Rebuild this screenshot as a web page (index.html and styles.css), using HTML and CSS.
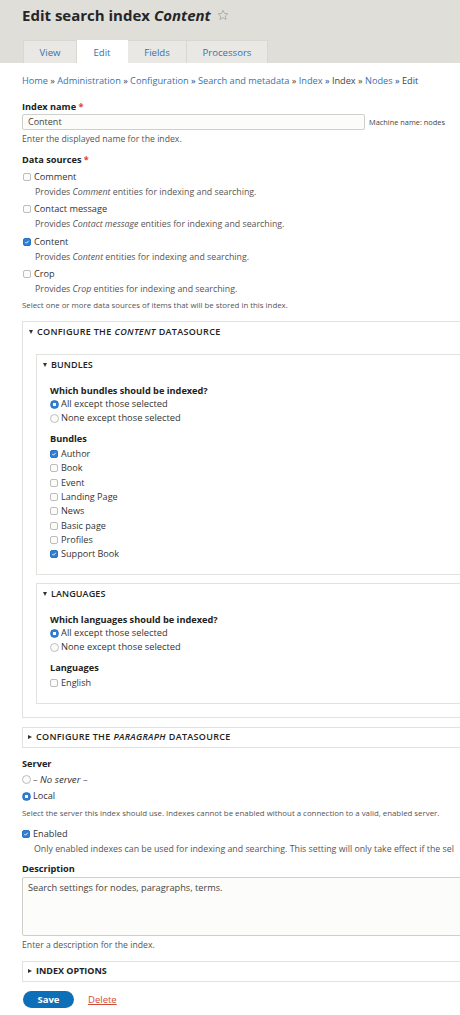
FILE: index.html
```html
<!DOCTYPE html>
<html lang="en">
<head>
    <meta charset="UTF-8">
    <meta name="viewport" content="width=device-width, initial-scale=1.0">
    <title>Edit search index Content</title>
    <link rel="stylesheet" href="styles.css">
</head>
<body>
    <header class="page-head">
        <h1>Edit search index <em>Content</em>
            <svg class="star" width="12" height="12" viewBox="0 0 24 24"><path d="M12 2.5l2.9 6.3 6.8.7-5.1 4.6 1.5 6.8L12 17.4l-6.1 3.5 1.5-6.8-5.1-4.6 6.8-.7z" fill="none" stroke="#a5a5a0" stroke-width="1.6" stroke-linejoin="round"/></svg>
        </h1>
        <nav class="tabs">
            <a href="#" class="tab tab-view">View</a>
            <a href="#" class="tab tab-edit active">Edit</a>
            <a href="#" class="tab tab-fields">Fields</a>
            <a href="#" class="tab tab-proc">Processors</a>
        </nav>
    </header>

    <main class="content">
        <div class="breadcrumb">
            <a href="#">Home</a> » <a href="#">Administration</a> » <a href="#">Configuration</a> » <a href="#">Search and metadata</a> » <a href="#">Index</a> » Index » <a href="#">Nodes</a> » Edit
        </div>

        <div class="label label-first">Index name <span class="req">*</span></div>
        <div class="name-row">
            <div class="input">Content</div>
            <span class="machine">Machine name: nodes</span>
        </div>
        <p class="desc">Enter the displayed name for the index.</p>

        <div class="label label-sources">Data sources <span class="req">*</span></div>
        <div class="sources">
            <div class="source">
                <div class="option"><span class="cb"></span>Comment</div>
                <p class="opt-desc">Provides <em>Comment</em> entities for indexing and searching.</p>
            </div>
            <div class="source">
                <div class="option"><span class="cb"></span>Contact message</div>
                <p class="opt-desc">Provides <em>Contact message</em> entities for indexing and searching.</p>
            </div>
            <div class="source">
                <div class="option"><span class="cb on"><svg viewBox="0 0 8 8"><path d="M1.8 4.1l1.5 1.5 3-3.2" fill="none" stroke="#fff" stroke-width="1.2"/></svg></span>Content</div>
                <p class="opt-desc">Provides <em>Content</em> entities for indexing and searching.</p>
            </div>
            <div class="source">
                <div class="option"><span class="cb"></span>Crop</div>
                <p class="opt-desc">Provides <em>Crop</em> entities for indexing and searching.</p>
            </div>
        </div>
        <p class="small">Select one or more data sources of items that will be stored in this index.</p>

        <section class="box box-content">
            <div class="summary open">Configure the <em>Content</em> datasource</div>
            <div class="box-body">
                <section class="box box-inner">
                    <div class="summary open">Bundles</div>
                    <div class="inner-body">
                        <div class="label">Which bundles should be indexed?</div>
                        <div class="option small-opt"><span class="rd on"></span>All except those selected</div>
                        <div class="option small-opt"><span class="rd"></span>None except those selected</div>
                        <div class="label label-group">Bundles</div>
                        <div class="list">
                            <div class="option list-opt"><span class="cb on"><svg viewBox="0 0 8 8"><path d="M1.8 4.1l1.5 1.5 3-3.2" fill="none" stroke="#fff" stroke-width="1.2"/></svg></span>Author</div>
                            <div class="option list-opt"><span class="cb"></span>Book</div>
                            <div class="option list-opt"><span class="cb"></span>Event</div>
                            <div class="option list-opt"><span class="cb"></span>Landing Page</div>
                            <div class="option list-opt"><span class="cb"></span>News</div>
                            <div class="option list-opt"><span class="cb"></span>Basic page</div>
                            <div class="option list-opt"><span class="cb"></span>Profiles</div>
                            <div class="option list-opt"><span class="cb on"><svg viewBox="0 0 8 8"><path d="M1.8 4.1l1.5 1.5 3-3.2" fill="none" stroke="#fff" stroke-width="1.2"/></svg></span>Support Book</div>
                        </div>
                    </div>
                </section>

                <section class="box box-inner box-lang">
                    <div class="summary open">Languages</div>
                    <div class="inner-body">
                        <div class="label">Which languages should be indexed?</div>
                        <div class="option small-opt"><span class="rd on"></span>All except those selected</div>
                        <div class="option small-opt"><span class="rd"></span>None except those selected</div>
                        <div class="label label-group">Languages</div>
                        <div class="option list-opt"><span class="cb"></span>English</div>
                    </div>
                </section>
            </div>
        </section>

        <section class="box box-closed">
            <div class="summary">Configure the <em>Paragraph</em> datasource</div>
        </section>

        <div class="label label-server">Server</div>
        <div class="option server-opt"><span class="rd"></span><em>– No server –</em></div>
        <div class="option server-opt server-local"><span class="rd on"></span>Local</div>
        <p class="small small-server">Select the server this index should use. Indexes cannot be enabled without a connection to a valid, enabled server.</p>

        <div class="option enabled-opt"><span class="cb on"><svg viewBox="0 0 8 8"><path d="M1.8 4.1l1.5 1.5 3-3.2" fill="none" stroke="#fff" stroke-width="1.2"/></svg></span>Enabled</div>
        <p class="opt-desc enabled-desc">Only enabled indexes can be used for indexing and searching. This setting will only take effect if the sel</p>

        <div class="label label-desc">Description</div>
        <div class="textarea">Search settings for nodes, paragraphs, terms.</div>
        <p class="desc desc-area">Enter a description for the index.</p>

        <section class="box box-closed box-options">
            <div class="summary strong">Index options</div>
        </section>

        <div class="actions">
            <a href="#" class="btn-save">Save</a>
            <a href="#" class="link-delete">Delete</a>
        </div>
    </main>
</body>
</html>
```

FILE: styles.css
```css
html, body {
    margin: 0;
    padding: 0;
}
body {
    font-family: "Open Sans", "DejaVu Sans", sans-serif;
    color: #333;
    background: #fff;
    overflow: hidden;
}
p { margin: 0; }

/* header + tabs */
.page-head {
    background: #dfded9;
    height: 63px;
    padding-left: 22px;
    box-sizing: border-box;
}
.page-head h1 {
    margin: 0;
    padding-top: 6px;
    font-size: 15px;
    line-height: 18px;
    font-weight: 700;
    color: #262626;
    display: flex;
    align-items: center;
}
.page-head h1 em { margin-left: 4px; }
.star { margin-left: 6px; }
.tabs {
    display: flex;
    margin-top: 16px;
    margin-left: 1px;
}
.tab {
    height: 23px;
    line-height: 23px;
    text-align: center;
    font-size: 9.6px;
    color: #3572b0;
    background: #e9e8e4;
    border: 1px solid #d8d7d2;
    border-bottom: 0;
    text-decoration: none;
    box-sizing: border-box;
}
.tab + .tab { border-left: 0; }
.tab.active { background: #fff; border-color: #fff; }
.tab-view { width: 54px; }
.tab-edit { width: 51px; }
.tab-fields { width: 59px; }
.tab-proc { width: 81px; }

/* main form */
.content {
    width: 560px;
    padding-left: 22px;
}
.breadcrumb {
    margin-top: 12px;
    font-size: 9.2px;
    line-height: 12px;
    color: #444;
    white-space: nowrap;
}
.breadcrumb a {
    color: #3572b0;
    text-decoration: none;
}
.label {
    font-size: 9.2px;
    line-height: 12px;
    font-weight: 700;
    color: #222;
}
.req { color: #e0452d; }
.label-first { margin-top: 14px; }
.name-row {
    display: flex;
    align-items: center;
    margin-top: 1px;
}
.input {
    width: 343px;
    height: 16px;
    box-sizing: border-box;
    border: 1px solid #cfcfcb;
    border-radius: 2px;
    background: #fcfcfa;
    padding-left: 5px;
    font-size: 9px;
    line-height: 14px;
    color: #444;
}
.machine {
    margin-left: 4px;
    font-size: 7.4px;
    color: #444;
}
.desc {
    margin-top: 3px;
    font-size: 8.7px;
    line-height: 12px;
    color: #555;
}
.label-sources { margin-top: 9px; }
.sources { margin-top: 3.7px; }
.option {
    display: flex;
    align-items: center;
    font-size: 9.2px;
    line-height: 14px;
    color: #333;
}
.source { margin-bottom: 4.5px; }
.source .option { margin-left: 1px; }
.opt-desc {
    margin-top: 2px;
    margin-left: 13px;
    font-size: 8.8px;
    line-height: 12px;
    color: #555;
}
.small {
    font-size: 7.85px;
    line-height: 10px;
    color: #555;
    white-space: nowrap;
}

/* checkbox + radio */
.cb, .rd {
    flex: none;
    width: 8px;
    height: 8px;
    box-sizing: border-box;
    border: 1px solid #bdbdbb;
    background: #fbfbfa;
    margin-right: 3px;
}
.cb { border-radius: 2px; }
.cb svg { display: block; width: 6px; height: 6px; }
.cb.on {
    background: #2f7fd4;
    border-color: #2a73c2;
}
.rd {
    width: 9px;
    height: 9px;
    border-radius: 50%;
    margin-right: 2px;
}
.rd.on {
    background: radial-gradient(circle, #fff 0 1.4px, #2f7fd4 1.9px);
    border-color: #2a73c2;
}

/* details boxes */
.box {
    border: 1px solid #e2e2df;
    background: #fff;
}
.box-content { margin-top: 11.7px; }
.summary {
    display: flex;
    align-items: center;
    font-size: 9px;
    line-height: 10px;
    font-weight: 600;
    letter-spacing: 0.3px;
    text-transform: uppercase;
    color: #222;
    padding: 5px 0 5px 5px;
}
.summary em { margin: 0 3px; }
.summary::before {
    content: '';
    width: 0;
    height: 0;
    border-top: 2.5px solid transparent;
    border-bottom: 2.5px solid transparent;
    border-left: 4px solid #333;
    margin-right: 4px;
}
.summary.open::before {
    border-left: 2.5px solid transparent;
    border-right: 2.5px solid transparent;
    border-top: 4px solid #333;
    border-bottom: 0;
    margin-left: 1px;
}
.summary.strong { font-weight: 700; letter-spacing: 0; }
.box-body {
    padding: 12px 0 12.4px 13px;
}
.box-inner .summary { padding: 4.7px 0 5px 5px; letter-spacing: 0.1px; }
.inner-body {
    padding: 10px 0 12.4px 13px;
}
.box-lang { margin-top: 8px; }
.box-lang .inner-body { padding: 10.6px 0 12.8px 13px; }
.small-opt { font-size: 9.3px; }
.label-group { margin-top: 8px; margin-bottom: 1.8px; }
.list-opt {
    font-size: 9.1px;
    line-height: 14.34px;
}
.box-closed { margin-top: 9.3px; }
.box-closed .summary { padding: 4.5px 0 4.5px 5px; }

/* server + lower fields */
.label-server { margin-top: 10.3px; }
.server-opt { margin-top: 2.7px; }
.server-opt em { font-size: 9.6px; }
.server-local { margin-top: 2.3px; }
.small-server { margin-top: 4.7px; }
.enabled-opt { margin-top: 8.7px; }
.enabled-desc {
    margin-left: 12px;
    margin-top: 2.3px;
    white-space: nowrap;
}
.label-desc { margin-top: 8px; }
.textarea {
    margin-top: 2px;
    height: 59.3px;
    box-sizing: border-box;
    border: 1px solid #cfcfcb;
    border-radius: 2px;
    background: #fcfcfa;
    padding: 3px 5px;
    font-size: 9.2px;
    line-height: 13px;
    color: #444;
}
.desc-area { margin-top: 3px; }
.box-options { margin-top: 10px; }
.box-options .summary { padding: 4.2px 0 4.2px 5px; }

.actions {
    display: flex;
    align-items: center;
    margin-top: 9.3px;
}
.btn-save {
    display: inline-block;
    width: 51px;
    height: 17.6px;
    line-height: 17.6px;
    margin-left: 1px;
    text-align: center;
    background: #0d6fb8;
    color: #fff;
    font-size: 9.5px;
    font-weight: 700;
    border-radius: 9px;
    text-decoration: none;
}
.link-delete {
    margin-left: 14px;
    font-size: 9.5px;
    color: #d04a3b;
    text-decoration: underline;
}
```
